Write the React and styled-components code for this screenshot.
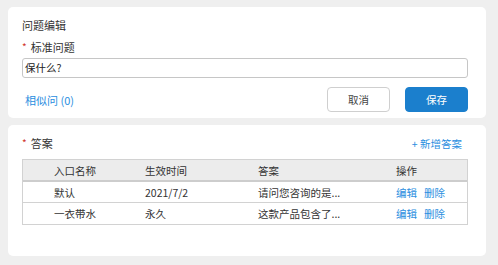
import React from 'react';
import styled, { createGlobalStyle } from 'styled-components';

const GlobalStyle = createGlobalStyle`
    html, body {
        margin: 0;
        padding: 0;
        background: #efefef;
    }
    body {
        font-family: "Noto Sans CJK SC", "Liberation Sans", sans-serif;
        color: #333;
    }
`

const Page = styled.div`
    width: 498px;
    height: 265px;
    box-sizing: border-box;
    padding: 7px 12px 9px 8px;
    display: flex;
    flex-direction: column;
    gap: 7px;
`

const Card = styled.div`
    background: #fff;
    border-radius: 5px;
    height: ${p => p.h}px;
    box-sizing: border-box;
    padding: ${p => p.pad};
    display: flex;
    flex-direction: column;
`

const Title = styled.div`
    font-size: 11px;
    line-height: 16px;
    color: #333;
`

const Label = styled.div`
    font-size: 11px;
    line-height: 16px;
    display: flex;
    align-items: center;
    gap: 4px;

    .star {
        color: #d0342c;
        font-size: 10px;
    }
`

const Input = styled.div`
    height: 20px;
    box-sizing: border-box;
    border: 1px solid #c6c6c6;
    border-radius: 3px;
    font-size: 10.5px;
    line-height: 18px;
    padding-left: 2px;
    color: #222;
    width: 446px;
`

const Actions = styled.div`
    display: flex;
    align-items: center;
    width: 446px;
`

const LinkText = styled.span`
    color: #2a8ee0;
    font-size: ${p => p.size || 11}px;
    cursor: pointer;
`

const Button = styled.div`
    width: ${p => p.w}px;
    height: 25px;
    box-sizing: border-box;
    border-radius: 4px;
    display: flex;
    align-items: center;
    justify-content: center;
    font-size: 10.5px;
    border: 1px solid ${p => (p.primary ? '#1b7fcd' : '#cfcfcf')};
    background: ${p => (p.primary ? '#1b7fcd' : '#fff')};
    color: ${p => (p.primary ? '#fff' : '#444')};
`

const Header = styled.div`
    display: flex;
    align-items: center;
    justify-content: space-between;
    width: 446px;
`

const Table = styled.div`
    width: 446px;
    border: 1px solid #d2d2d2;
    box-sizing: border-box;
    font-size: 10.5px;
`

const Row = styled.div`
    display: grid;
    grid-template-columns: 112px 113px 138px 81px;
    height: ${p => (p.head ? 22 : 21)}px;
    align-items: center;
    background: ${p => (p.head ? '#ececec' : '#fff')};
    border-bottom: ${p => (p.head ? '2px solid #cdcdcd' : '1px solid #d2d2d2')};
    box-sizing: border-box;

    &:last-child {
        border-bottom: 0;
    }
`

const Cell = styled.div`
    padding-left: ${p => p.indent || 10}px;
    white-space: nowrap;
    display: flex;
    gap: 7px;
`

const rows = [
    { name: '默认', time: '2021/7/2', answer: '请问您咨询的是...' },
    { name: '一衣带水', time: '永久', answer: '这款产品包含了...' },
];

const App = () => {
    return (
        <Page>
            <GlobalStyle />
            <Card h={111} pad="10px 14px 0 14px">
                <Title>问题编辑</Title>
                <Label style={{ marginTop: 6 }}>
                    <span className='star'>*</span>标准问题
                </Label>
                <Input style={{ marginTop: 3 }}>保什么?</Input>
                <Actions style={{ marginTop: 9 }}>
                    <LinkText style={{ marginLeft: 3 }}>相似问 (0)</LinkText>
                    <div style={{ flex: 1 }} />
                    <Button w={63}>取消</Button>
                    <div style={{ width: 15 }} />
                    <Button w={63} primary>保存</Button>
                </Actions>
            </Card>
            <Card h={131} pad="10px 14px 0 14px">
                <Header>
                    <Label>
                        <span className='star'>*</span>答案
                    </Label>
                    <LinkText size={10.5} style={{ marginRight: 6 }}>+ 新增答案</LinkText>
                </Header>
                <Table style={{ marginTop: 8 }}>
                    <Row head>
                        <Cell indent={31}>入口名称</Cell>
                        <Cell>生效时间</Cell>
                        <Cell>答案</Cell>
                        <Cell>操作</Cell>
                    </Row>
                    {
                        rows.map(({ name, time, answer }, index) => (
                            <Row key={index}>
                                <Cell indent={31}>{name}</Cell>
                                <Cell>{time}</Cell>
                                <Cell>{answer}</Cell>
                                <Cell>
                                    <LinkText size={10.5}>编辑</LinkText>
                                    <LinkText size={10.5}>删除</LinkText>
                                </Cell>
                            </Row>
                        ))
                    }
                </Table>
            </Card>
        </Page>
    );
};

export default App;
